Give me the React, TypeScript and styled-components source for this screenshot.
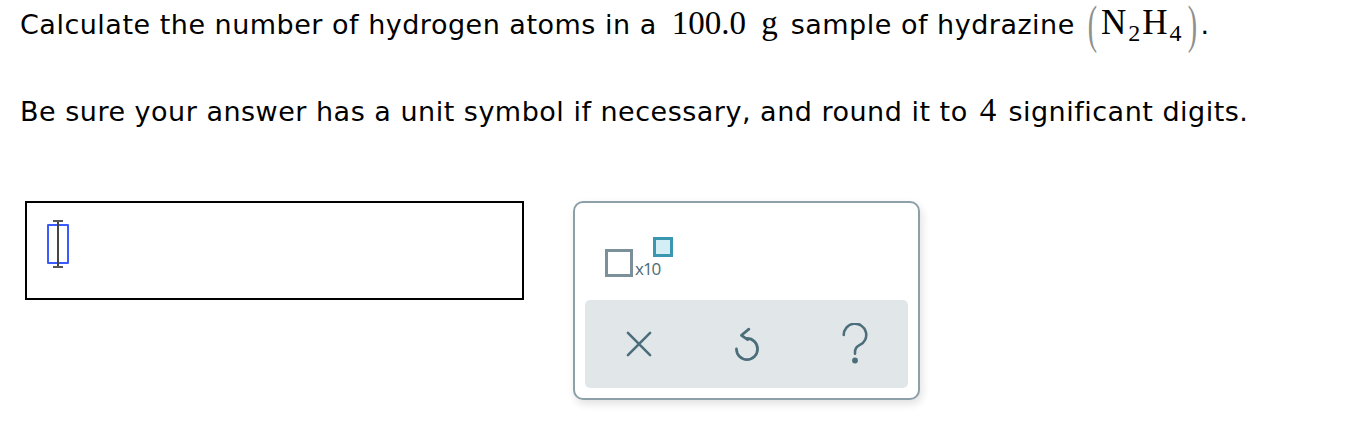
import React from 'react';
import styled, { createGlobalStyle } from 'styled-components';

const GlobalStyle = createGlobalStyle`
  body {
    margin: 0;
    background: #ffffff;
    font-family: "DejaVu Sans", Verdana, sans-serif;
    color: #000;
  }
`;

const Page = styled.main`
  width: 1354px;
  height: 432px;
  padding: 6px 0 0 20px;
  box-sizing: border-box;
`;

const Line = styled.p<{ $top: number }>`
  margin: ${(p) => p.$top}px 0 0 0;
  font-size: 27px;
  line-height: 34px;
  height: 34px;
  letter-spacing: 0.5px;
  white-space: nowrap;
`;

const Math = styled.span<{ $left?: number; $right?: number; $size?: number }>`
  font-family: "Liberation Serif", "Times New Roman", serif;
  font-size: ${(p) => p.$size ?? 33}px;
  letter-spacing: 0;
  margin-left: ${(p) => p.$left ?? 0}px;
  margin-right: ${(p) => p.$right ?? 0}px;
`;

const Paren = styled.span`
  display: inline-block;
  font-size: 33px;
  color: #8f8f8f;
  transform: scale(0.85, 1.6);
  transform-origin: 50% 45%;
  margin: 0 3px;
`;

const Sub = styled.sub`
  font-size: 24px;
  vertical-align: -7px;
  line-height: 0;
  margin: 0 2px 0 2px;
`;

const AnswerRow = styled.section`
  display: flex;
  align-items: flex-start;
  gap: 49px;
  margin-top: 74px;
  padding-left: 5px;
`;

const InputBox = styled.div`
  width: 499px;
  height: 99px;
  box-sizing: border-box;
  border: 2px solid #000;
  padding: 18px 0 0 20px;
`;

const Caret = styled.div`
  position: relative;
  width: 22px;
  height: 40px;
  margin-top: 3px;
  box-sizing: border-box;
  border: 2px solid #3b5bff;
  border-radius: 1px;
`;

const Beam = styled.div`
  position: absolute;
  left: 50%;
  top: -6px;
  bottom: -6px;
  width: 2px;
  margin-left: -1px;
  background: #444;
  &::before,
  &::after {
    content: '';
    position: absolute;
    left: -4px;
    width: 10px;
    height: 2px;
    background: #555;
  }
  &::before {
    top: 0;
  }
  &::after {
    bottom: 0;
  }
`;

const Panel = styled.div`
  width: 347px;
  height: 199px;
  box-sizing: border-box;
  border: 2px solid #8da0a8;
  border-radius: 10px;
  box-shadow: 2px 4px 8px rgba(0, 0, 0, 0.12);
  background: #fff;
  padding: 0 10px 10px 10px;
  display: flex;
  flex-direction: column;
  justify-content: space-between;
`;

const Notation = styled.div`
  display: flex;
  align-items: flex-end;
  margin: 34px 0 0 20px;
  height: 40px;
`;

const BigSlot = styled.div`
  width: 28px;
  height: 28px;
  box-sizing: border-box;
  border: 3px solid #7b9099;
`;

const Times = styled.span`
  font-family: "Open Sans", "DejaVu Sans", sans-serif;
  font-size: 17px;
  line-height: 15px;
  color: #4a6a75;
  letter-spacing: -1px;
  margin-left: 2px;
  margin-bottom: 1px;
`;

const Exponent = styled.div`
  width: 20px;
  height: 20px;
  box-sizing: border-box;
  border: 3px solid #3a96b1;
  background: #d4eef5;
  align-self: flex-start;
  margin-left: -7px;
`;

const Actions = styled.div`
  height: 88px;
  background: #e1e6e9;
  border-radius: 5px;
  display: flex;
  align-items: center;
  justify-content: center;
  gap: 64px;
`;

const IconButton = styled.button`
  border: none;
  background: none;
  padding: 0;
  width: 44px;
  height: 44px;
  display: flex;
  align-items: center;
  justify-content: center;
  color: #4b6e7a;
  cursor: pointer;
`;

const ClearIcon = () => (
  <svg width="28" height="28" viewBox="0 0 24 24" fill="none" stroke="currentColor" strokeWidth="2.2" strokeLinecap="round">
    <path d="M2.5 2.5 L21.5 21.5 M21.5 2.5 L2.5 21.5" />
  </svg>
);

const UndoIcon = () => (
  <svg width="30" height="36" viewBox="0 0 24 29" fill="none" stroke="currentColor" strokeWidth="2.2" strokeLinecap="round" strokeLinejoin="round">
    <path d="M12 10 A8.5 8.5 0 1 1 3.5 18.5" />
    <path d="M13.5 2.5 L7.5 7.5 L12.5 11" />
  </svg>
);

const HelpIcon = () => (
  <svg width="30" height="42" viewBox="0 0 20 28" fill="none" stroke="currentColor" strokeWidth="1.7" strokeLinecap="round">
    <path d="M2.5 8 A7.5 7.5 0 1 1 13 14.8 C10.6 16 10 17.3 10 19.5 V20.5" />
    <circle cx="10" cy="25" r="1.1" fill="currentColor" />
  </svg>
);

export default function App() {
  return (
    <>
      <GlobalStyle />
      <Page>
        <Line $top={0}>
          Calculate the number of hydrogen atoms in a <Math $left={6}>100.0</Math>{' '}
          <Math $left={6} $right={4}>g</Math> sample of hydrazine{' '}
          <Math $size={35}>
            <Paren>(</Paren>N<Sub>2</Sub>H<Sub>4</Sub>
            <Paren>)</Paren>
          </Math>
          .
        </Line>
        <Line $top={53}>
          Be sure your answer has a unit symbol if necessary, and round it to{' '}
          <Math $left={3} $right={3}>4</Math> significant digits.
        </Line>
        <AnswerRow>
          <InputBox>
            <Caret>
              <Beam />
            </Caret>
          </InputBox>
          <Panel>
            <Notation>
              <BigSlot />
              <Times>x10</Times>
              <Exponent />
            </Notation>
            <Actions>
              <IconButton aria-label="Clear">
                <ClearIcon />
              </IconButton>
              <IconButton aria-label="Undo">
                <UndoIcon />
              </IconButton>
              <IconButton aria-label="Help">
                <HelpIcon />
              </IconButton>
            </Actions>
          </Panel>
        </AnswerRow>
      </Page>
    </>
  );
}
